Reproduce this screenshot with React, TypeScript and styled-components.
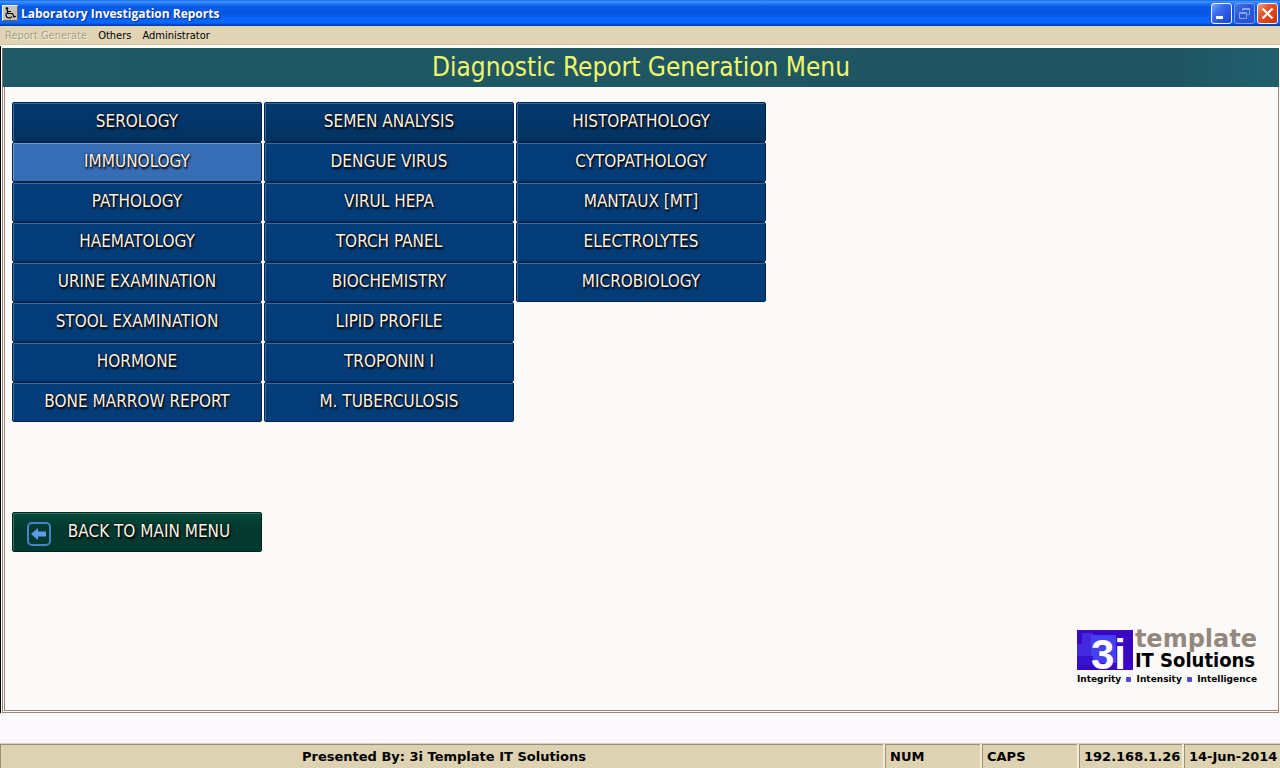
import React from 'react';
import styled, { createGlobalStyle } from 'styled-components';

const GlobalStyle = createGlobalStyle`
  * { box-sizing: border-box; }
  body { margin: 0; background: #fbf9fb; color: #000; font-family: 'DejaVu Sans Condensed', 'DejaVu Sans', sans-serif; }
  button { margin: 0; padding: 0; border: 0; font: inherit; cursor: pointer; }
`;

const Window = styled.div`
  display: flex;
  flex-direction: column;
  min-height: 100vh;
`;

const TitleBar = styled.header`
  display: flex;
  align-items: center;
  height: 26px;
  padding: 0 2px;
  background: linear-gradient(#0a50d8 0, #3f95ff 1px, #2b83fb 3px, #0a5be6 6px, #0556e2 13px, #0765fb 19px, #0666ff 23px, #0243ba 25px, #0138a6 26px);
`;

const WindowTitle = styled.h1`
  flex: 1;
  margin: 0 0 0 3px;
  padding-top: 1px;
  font: bold 12px/16px 'Open Sans', sans-serif;
  color: #fff;
  text-shadow: 1px 1px 1px #0a2f8c;
`;

const WindowControls = styled.div`
  display: flex;
  gap: 2px;
`;

const ControlButton = styled.button<{ $tone: 'blue' | 'dim' | 'red' }>`
  display: flex;
  width: 21px;
  height: 21px;
  border: 1px solid ${p => (p.$tone === 'dim' ? '#7c9df0' : '#f3f5ff')};
  border-radius: 3px;
  background: ${p =>
    p.$tone === 'red'
      ? 'linear-gradient(135deg, #f0a080 0, #e2562c 35%, #d63f10 75%, #b83408)'
      : p.$tone === 'dim'
        ? 'linear-gradient(135deg, #4a72e4, #2c59dc 40%, #2450d0)'
        : 'linear-gradient(135deg, #7fa4f8 0, #3c6cec 35%, #2453e0 75%, #1c48c8)'};
`;

const MenuBar = styled.nav`
  display: flex;
  gap: 11px;
  height: 19px;
  padding: 0 5px;
  background: #dfd5b4;
  border-bottom: 1px solid #d2c7ac;
`;

const MenuItem = styled.button`
  padding-top: 1px;
  background: none;
  color: #000;
  font: 11px/17px 'DejaVu Sans Condensed', 'DejaVu Sans', sans-serif;
  &:disabled { color: #a79f88; text-shadow: 1px 1px 0 #f4eedb; }
`;

const Frame = styled.main`
  display: flex;
  flex: 1;
  flex-direction: column;
  margin: 1px 0 30px;
  padding: 2px 1px 0;
  border-left: 1px solid #000;
  background: #fffffb;
`;

const Banner = styled.h2`
  margin: 0;
  padding: 1px 0 2px;
  border-left: 1px solid #77746a;
  background: linear-gradient(90deg, #205866, #1f5563 92%, #215f6d);
  color: #f0f768;
  font: 26px/36px 'DejaVu Sans Condensed', 'DejaVu Sans', sans-serif;
  text-align: center;
`;

const Workspace = styled.div`
  display: flex;
  flex: 1;
  flex-direction: column;
  padding: 15px 21px 24px 7px;
  border: 3px double #9c8574;
  border-top: 0;
  border-right: 1px solid #9c8574;
  background: #fbfaf8;
`;

const MenuColumns = styled.div`
  display: flex;
  flex-wrap: wrap;
  align-items: flex-start;
  gap: 2px;
`;

const MenuColumn = styled.div`
  display: flex;
  flex-direction: column;
  width: 250px;
`;

const PanelButton = styled.button<{ $kind?: 'active' | 'back' }>`
  display: grid;
  grid-template-columns: ${p => (p.$kind === 'back' ? '24px 1fr' : '1fr')};
  align-items: center;
  width: 250px;
  height: 40px;
  padding: 0 13px 2px;
  border: 1px solid ${p => (p.$kind === 'back' ? '#00241a' : '#012448')};
  border-radius: 2px;
  background: ${p =>
    p.$kind === 'active' ? '#376db5' : p.$kind === 'back' ? 'linear-gradient(#024a3b, #03392e 40%, #033a30)' : 'linear-gradient(#043d79, #033c76)'};
  box-shadow: inset 1px 1px 0 ${p => (p.$kind === 'active' ? '#6c9ad6' : p.$kind === 'back' ? '#237a62' : '#3569a2')};
  color: #fbf3e6;
  font: 17px/24px 'DejaVu Sans Condensed', 'DejaVu Sans', sans-serif;
  text-align: center;
  text-shadow: 1px 2px 2px #000, 0 0 2px #000;
  ${MenuColumn} > &:first-child { background: linear-gradient(#03396f, #023260); }
`;

const BackArea = styled.div`
  margin-top: 90px;
`;

const Logo = styled.footer`
  display: grid;
  grid-template-columns: 56px auto;
  column-gap: 2px;
  align-self: flex-end;
  margin-top: auto;
`;

const LogoMark = styled.svg`
  overflow: visible;
`;

const LogoName = styled.div`
  display: flex;
  flex-direction: column;
  font-weight: bold;
`;

const LogoTop = styled.span`
  color: #94887e;
  font: bold 24px/18px 'DejaVu Sans', sans-serif;
`;

const LogoBottom = styled.span`
  font: bold 20px/24px 'DejaVu Sans Condensed', sans-serif;
`;

const Tagline = styled.div`
  display: flex;
  grid-column: 1 / -1;
  align-items: center;
  justify-content: space-between;
  font: bold 9px/14px 'DejaVu Sans', sans-serif;
`;

const Dot = styled.i`
  width: 5px;
  height: 5px;
  border-radius: 1px;
  background: #5048d0;
`;

const StatusBar = styled.footer`
  display: grid;
  grid-template-columns: minmax(0, 1fr) 95px 95px 103px 96px;
  gap: 2px;
  height: 25px;
  border-top: 1px solid #d8d0b6;
  background: #f3ecd4;
`;

const StatusCell = styled.div<{ $center?: boolean }>`
  overflow: hidden;
  padding-left: 4px;
  border: 1px solid #9a9078;
  border-right: 0;
  border-bottom: 0;
  background: #ddd2b1;
  font: bold 13px/23px 'DejaVu Sans', sans-serif;
  text-align: ${p => (p.$center ? 'center' : 'left')};
  white-space: nowrap;
`;

const columns = [
  ['SEROLOGY', 'IMMUNOLOGY', 'PATHOLOGY', 'HAEMATOLOGY', 'URINE EXAMINATION', 'STOOL EXAMINATION', 'HORMONE', 'BONE MARROW REPORT'],
  ['SEMEN ANALYSIS', 'DENGUE VIRUS', 'VIRUL HEPA', 'TORCH PANEL', 'BIOCHEMISTRY', 'LIPID PROFILE', 'TROPONIN I', 'M. TUBERCULOSIS'],
  ['HISTOPATHOLOGY', 'CYTOPATHOLOGY', 'MANTAUX [MT]', 'ELECTROLYTES', 'MICROBIOLOGY'],
];

const AppIcon = () => (
  <svg width="16" height="16" viewBox="0 0 16 16" aria-hidden="true">
    <path fill="#c6c3b8" d="M0 0h16v16H0z" />
    <path fill="none" stroke="#f0efe8" d="M.5 15V.5H15" />
    <path fill="none" stroke="#65625c" d="M1 15.5h14.500V1" />
    <circle cx="5" cy="3.500" r="1.300" />
    <path fill="none" stroke="#000" strokeWidth="1.200" d="M5 4.500l.8 4h4.700l1.500 3.500 1.800-.8M5.500 6.500h3.500M4.500 8a2.800 2.800 0 1 0 5.500 3.500" />
  </svg>
);

export default function App() {
  return (
    <Window>
      <GlobalStyle />
      <TitleBar>
        <AppIcon />
        <WindowTitle>Laboratory Investigation Reports</WindowTitle>
        <WindowControls>
          <ControlButton $tone="blue" aria-label="Minimize">
            <svg width="19" height="19"><path fill="#fff" d="M4 12h7v3H4z" /></svg>
          </ControlButton>
          <ControlButton $tone="dim" aria-label="Restore">
            <svg width="19" height="19" fill="none" stroke="#88a5f3">
              <path d="M7.500 7V4.500h7v6H12M7 5.500h8M4.500 8.500h7v6h-7zM4 9.500h8" />
            </svg>
          </ControlButton>
          <ControlButton $tone="red" aria-label="Close">
            <svg width="19" height="19"><path stroke="#fff" strokeWidth="2.200" d="M4.500 4.500l10 10M14.500 4.500l-10 10" /></svg>
          </ControlButton>
        </WindowControls>
      </TitleBar>
      <MenuBar>
        <MenuItem disabled>Report Generate</MenuItem>
        <MenuItem>Others</MenuItem>
        <MenuItem>Administrator</MenuItem>
      </MenuBar>
      <Frame>
        <Banner>Diagnostic Report Generation Menu</Banner>
        <Workspace>
          <MenuColumns>
            {columns.map(items => (
              <MenuColumn key={items[0]}>
                {items.map(item => (
                  <PanelButton key={item} $kind={item === 'IMMUNOLOGY' ? 'active' : undefined}>{item}</PanelButton>
                ))}
              </MenuColumn>
            ))}
          </MenuColumns>
          <BackArea>
            <PanelButton $kind="back">
              <svg width="26" height="30" viewBox="0 0 26 30" aria-hidden="true">
                <rect x="2" y="7" width="22" height="22" rx="4" fill="none" stroke="#4583cb" strokeWidth="2" />
                <path fill="#5b9bee" d="M5 18l7-6v3.500h8v5h-8V24z" />
              </svg>
              <span>BACK TO MAIN MENU</span>
            </PanelButton>
          </BackArea>
          <Logo>
            <LogoMark width="56" height="40" viewBox="0 0 56 40">
              <path fill="#3a08c4" d="M0 0h56v40H0z" />
              <path fill="#4428dc" d="M5 3h11v11H5zM0 14h15v12H0z" />
              <path fill="#4540f0" d="M14 5h25v28H14z" />
              <path fill="#3414cc" d="M0 26h16v9H0z" />
              <text x="14" y="39" fill="#fff" fontFamily="Liberation Sans" fontWeight="bold" fontSize="42">3i</text>
            </LogoMark>
            <LogoName>
              <LogoTop>template</LogoTop>
              <LogoBottom>IT Solutions</LogoBottom>
            </LogoName>
            <Tagline>
              <span>Integrity</span><Dot /><span>Intensity</span><Dot /><span>Intelligence</span>
            </Tagline>
          </Logo>
        </Workspace>
      </Frame>
      <StatusBar>
        <StatusCell $center>Presented By: 3i Template IT Solutions</StatusCell>
        <StatusCell>NUM</StatusCell>
        <StatusCell>CAPS</StatusCell>
        <StatusCell>192.168.1.26</StatusCell>
        <StatusCell>14-Jun-2014</StatusCell>
      </StatusBar>
    </Window>
  );
}
